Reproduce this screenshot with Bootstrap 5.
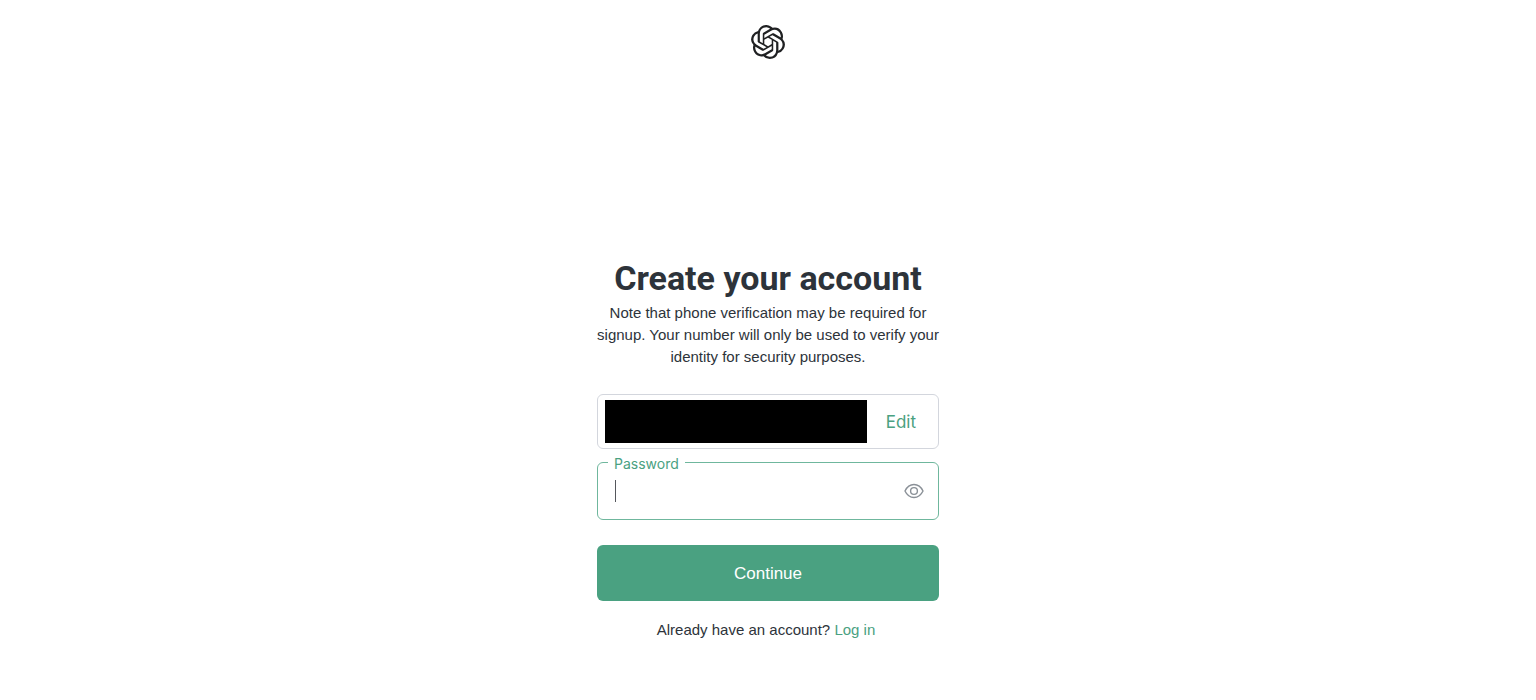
<!DOCTYPE html>
<html lang="en">
<head>
<meta charset="utf-8">
<meta name="viewport" content="width=device-width, initial-scale=1">
<title>Create your account</title>
<link href="https://cdn.jsdelivr.net/npm/bootstrap@5.3.0/dist/css/bootstrap.min.css" rel="stylesheet">
<style>
body { font-family: "Liberation Sans", sans-serif; color: #2d333a; font-size: 15px; line-height: 22px; }
.logo-bar { padding-top: 25px; padding-bottom: 199px; }
.signup { max-width: 342px; }
.signup-title { font-family: Roboto, "Liberation Sans", sans-serif; font-size: 34px; line-height: 40px; font-weight: 700; white-space: nowrap; }
.signup-note { margin-bottom: 26px; }
.accent, .accent:hover { color: #4aa181; }
.field-box { height: 55px; border: 1px solid #d3d6dd; border-radius: 6px; }
.user-input { background: #000; color: #000; border: 0; border-radius: 0; height: 43px; margin-left: 7px; }
.edit-link { font-family: Inter, sans-serif; font-size: 17px; padding: 0 22px 0 19px; }
.password-box { height: 58px; margin-top: 13px; margin-bottom: 25px; border-color: #6fb79d; }
.password-box .form-control, .password-box .form-control:focus { background: transparent; border: 0; box-shadow: none; padding: 0 16px; font-size: 17px; caret-color: transparent; }
.float-label { font-family: Inter, sans-serif; top: -10px; left: 10px; padding: 0 6px; background: #fff; font-size: 14px; line-height: 22px; }
.caret { left: 17px; top: 17px; width: 1px; height: 22px; background: #55575c; }
.eye-btn { padding: 0 14px; color: #8a9097; border: 0; background: none; line-height: 1; }
.continue-btn, .continue-btn:hover { background: #4aa181; color: #fff; border: 0; border-radius: 6px; height: 56px; padding: 8px 0 6px; font-size: 17px; }
.other-page { margin-top: 18px; }
</style>
</head>
<body class="bg-white">
<header class="logo-bar d-flex justify-content-center">
  <svg width="34" height="34" viewBox="0 0 24 24" fill="#202123" role="img" aria-label="OpenAI"><path d="M22.2819 9.8211a5.9847 5.9847 0 0 0-.5157-4.9108 6.0462 6.0462 0 0 0-6.5098-2.9A6.0651 6.0651 0 0 0 4.9807 4.1818a5.9847 5.9847 0 0 0-3.9977 2.9 6.0462 6.0462 0 0 0 .7427 7.0966 5.98 5.98 0 0 0 .511 4.9107 6.051 6.051 0 0 0 6.5146 2.9001A5.9847 5.9847 0 0 0 13.2599 24a6.0557 6.0557 0 0 0 5.7718-4.2058 5.9894 5.9894 0 0 0 3.9977-2.9001 6.0557 6.0557 0 0 0-.7475-7.0729zm-9.022 12.6081a4.4755 4.4755 0 0 1-2.8764-1.0408l.1419-.0804 4.7783-2.7582a.7948.7948 0 0 0 .3927-.6813v-6.7369l2.02 1.1686a.071.071 0 0 1 .038.052v5.5826a4.504 4.504 0 0 1-4.4945 4.4944zm-9.6607-4.1254a4.4708 4.4708 0 0 1-.5346-3.0137l.142.0852 4.783 2.7582a.7712.7712 0 0 0 .7806 0l5.8428-3.3685v2.3324a.0804.0804 0 0 1-.0332.0615L9.74 19.9502a4.4992 4.4992 0 0 1-6.1408-1.6464zM2.3408 7.8956a4.485 4.485 0 0 1 2.3655-1.9728V11.6a.7664.7664 0 0 0 .3879.6765l5.8144 3.3543-2.0201 1.1685a.0757.0757 0 0 1-.071 0l-4.8303-2.7865A4.504 4.504 0 0 1 2.3408 7.872zm16.5963 3.8558L13.1038 8.364 15.1192 7.2a.0757.0757 0 0 1 .071 0l4.8303 2.7913a4.4944 4.4944 0 0 1-.6765 8.1042v-5.6772a.79.79 0 0 0-.407-.667zm2.0107-3.0231l-.142-.0852-4.7735-2.7818a.7759.7759 0 0 0-.7854 0L9.409 9.2297V6.8974a.0662.0662 0 0 1 .0284-.0615l4.8303-2.7866a4.4992 4.4992 0 0 1 6.6802 4.66zM8.3065 12.863l-2.02-1.1638a.0804.0804 0 0 1-.038-.0567V6.0742a4.4992 4.4992 0 0 1 7.3757-3.4537l-.142.0805L8.704 5.459a.7948.7948 0 0 0-.3927.6813zm1.0976-2.3654l2.602-1.4998 2.6069 1.4998v2.9994l-2.5974 1.4997-2.6067-1.4997Z"/></svg>
</header>
<main class="signup mx-auto">
  <h1 class="signup-title text-center mb-1">Create your account</h1>
  <p class="signup-note text-center">Note that phone verification may be required for signup. Your number will only be used to verify your identity for security purposes.</p>
  <form>
    <div class="field-box d-flex align-items-center">
      <input class="user-input form-control" type="email" aria-label="Email address" readonly>
      <a class="edit-link accent text-decoration-none" href="#">Edit</a>
    </div>
    <div class="field-box password-box position-relative d-flex align-items-center">
      <label class="float-label accent position-absolute" for="password">Password</label>
      <input class="form-control" type="password" id="password">
      <span class="caret position-absolute"></span>
      <button class="eye-btn d-flex" type="button" aria-label="Show password">
        <svg width="20" height="16" viewBox="0 0 20 16" fill="none" stroke="currentColor" stroke-width="1.4"><path d="M1 8C3 3.8 6.2 1.5 10 1.5S17 3.8 19 8c-2 4.2-5.200 6.500-9 6.500S3 12.200 1 8Z"/><circle cx="10" cy="8" r="3.400"/></svg>
      </button>
    </div>
    <button class="continue-btn btn w-100" type="submit">Continue</button>
  </form>
  <p class="other-page text-center mb-0 pe-1">Already have an account? <a class="accent text-decoration-none" href="#">Log in</a></p>
</main>
<script src="https://cdn.jsdelivr.net/npm/bootstrap@5.3.0/dist/js/bootstrap.bundle.min.js"></script>
</body>
</html>
